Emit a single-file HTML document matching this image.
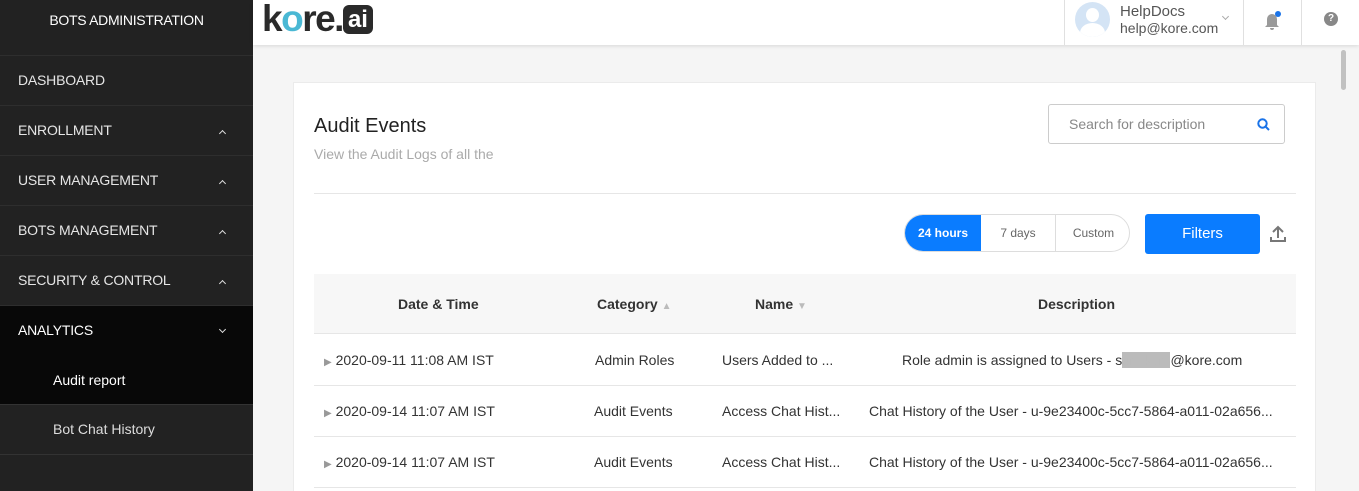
<!DOCTYPE html>
<html><head><style>
*{box-sizing:border-box;margin:0;padding:0}
html{width:1359px;height:491px;overflow:hidden}
body{width:1359px;height:491px;overflow:hidden;font-family:"Liberation Sans",sans-serif;background:#f5f5f5;position:relative}
.sb{position:absolute;left:0;top:0;width:253px;height:491px;background:#222}
.sb .t{height:56px;color:#fff;font-size:14px;text-align:center;padding-top:12px;letter-spacing:-0.3px;border-bottom:1px solid #2e2e2e}
.it{height:50px;border-bottom:1px solid #2e2e2e;color:#e6e6e6;font-size:14px;padding:16px 0 0 18px;position:relative;letter-spacing:-0.2px}
.it .c{position:absolute;left:220px;top:25px;width:5px;height:5px;border-left:1.5px solid #ddd;border-top:1.5px solid #ddd;transform:rotate(45deg)}
.it .d{transform:rotate(225deg);top:21px}
.an{background:#080808;border-bottom:none}
.sub{height:50px;color:#fff;font-size:14px;padding:16px 0 0 53px;border-bottom:1px solid #333}
.hd{position:absolute;left:253px;top:0;right:0;height:45px;background:#fff;box-shadow:0 1px 4px rgba(0,0,0,.12)}
.card{position:absolute;left:293px;top:82px;width:1023px;height:409px;background:#fff;border:1px solid #ebebeb;border-bottom:none;overflow:hidden}
.cell{position:absolute;font-size:14px;color:#333}
</style></head><body>
<div class="sb">
<div class="t">BOTS ADMINISTRATION</div>
<div class="it">DASHBOARD</div>
<div class="it">ENROLLMENT<span class="c"></span></div>
<div class="it">USER MANAGEMENT<span class="c"></span></div>
<div class="it">BOTS MANAGEMENT<span class="c"></span></div>
<div class="it">SECURITY &amp; CONTROL<span class="c"></span></div>
<div class="it an" style="color:#fff">ANALYTICS<span class="c d"></span></div>
<div class="sub" style="background:#080808;padding-top:0;height:49px;line-height:48px">Audit report</div>
<div class="sub" style="color:#ddd">Bot Chat History</div>
</div>
<div class="hd">
<div style="position:absolute;left:9px;top:-2px;font-size:37px;font-weight:bold;color:#2a2a2a;letter-spacing:-1.5px">k<span style="color:#4ab8d4">o</span>re.<span style="display:inline-block;background:#2a2a2a;color:#fff;border-radius:6px;font-size:24px;padding:0 5px;line-height:29px;vertical-align:4px;letter-spacing:0">ai</span></div>
<div style="position:absolute;left:811px;top:0;width:1px;height:45px;background:#e0e0e0"></div>
<div style="position:absolute;left:822px;top:2px;width:35px;height:35px;border-radius:50%;background:#d4e4f5;overflow:hidden"><div style="position:absolute;left:11px;top:6px;width:13px;height:14px;border-radius:50%;background:#fff"></div><div style="position:absolute;left:5px;top:21px;width:25px;height:20px;border-radius:50%;background:#fff"></div></div>
<div style="position:absolute;left:867px;top:3px;font-size:15px;color:#555">HelpDocs</div>
<div style="position:absolute;left:867px;top:20px;font-size:14px;color:#555">help@kore.com</div>
<div style="position:absolute;left:970px;top:14px;width:5px;height:5px;border-right:1px solid #aaa;border-bottom:1px solid #aaa;transform:rotate(45deg)"></div>
<div style="position:absolute;left:990px;top:0;width:1px;height:45px;background:#e0e0e0"></div>
<svg style="position:absolute;left:1010px;top:10px" width="20" height="22" viewBox="0 0 20 22"><path d="M4 15V9a5 5 0 0 1 10 0v6l2 2H2z M7 18a2 2 0 0 0 4 0z" fill="#9a9a9a"/><circle cx="15" cy="4" r="3" fill="#1a73e8"/></svg>
<div style="position:absolute;left:1048px;top:0;width:1px;height:45px;background:#e0e0e0"></div>
<div style="position:absolute;left:1071px;top:12px;width:14px;height:14px;border-radius:50%;background:#888;color:#fff;font-size:10px;font-weight:bold;text-align:center;line-height:14px">?</div>
</div>
<div style="position:absolute;left:1341px;top:50px;width:5px;height:40px;border-radius:3px;background:#c1c1c1"></div>
<div class="card">
<div style="position:absolute;left:20px;top:32px;font-size:20px;color:#222">Audit Events</div>
<div style="position:absolute;left:20px;top:63px;font-size:14px;color:#aaa">View the Audit Logs of all the</div>
<div style="position:absolute;left:754px;top:21px;width:237px;height:40px;border:1px solid #ccc;border-radius:3px;font-size:14px;color:#888;padding:11px 0 0 20px">Search for description
<svg style="position:absolute;right:14px;top:13px" width="13" height="13" viewBox="0 0 13 13"><circle cx="5.5" cy="5.5" r="4.2" stroke="#1a73e8" stroke-width="2" fill="none"/><path d="M8.5 8.5l3.5 3.5" stroke="#1a73e8" stroke-width="2"/></svg></div>
<div style="position:absolute;left:20px;top:110px;width:982px;height:1px;background:#e6e6e6"></div>
<div style="position:absolute;left:610px;top:131px;width:226px;height:38px;border:1px solid #ddd;border-radius:19px;overflow:hidden;font-size:12px;color:#666">
<div style="position:absolute;left:0;top:0;width:76px;height:38px;background:#0a7cff;color:#fff;font-weight:bold;text-align:center;line-height:37px">24 hours</div>
<div style="position:absolute;left:76px;top:0;width:75px;height:38px;border-right:1px solid #ddd;text-align:center;line-height:37px">7 days</div>
<div style="position:absolute;left:151px;top:0;width:75px;text-align:center;line-height:37px">Custom</div></div>
<div style="position:absolute;left:851px;top:131px;width:115px;height:40px;background:#0a7cff;border-radius:3px;color:#fff;font-size:15px;text-align:center;line-height:40px">Filters</div>
<svg style="position:absolute;left:975px;top:142px" width="18" height="18" viewBox="0 0 18 18"><path d="M9 13V2M4 7l5-5 5 5M2 12v4h14v-4" stroke="#777" stroke-width="2" fill="none"/></svg>
<div style="position:absolute;left:20px;top:191px;width:982px;height:60px;background:#f7f7f7;border-bottom:1px solid #e6e6e6"></div>
<div class="cell" style="left:104px;top:213px;font-weight:bold">Date &amp; Time</div>
<div class="cell" style="left:303px;top:213px;font-weight:bold">Category <span style="color:#bbb;font-size:10px">▲</span></div>
<div class="cell" style="left:461px;top:213px;font-weight:bold">Name <span style="color:#bbb;font-size:10px">▼</span></div>
<div class="cell" style="left:744px;top:213px;font-weight:bold">Description</div>
<div style="position:absolute;left:20px;top:302px;width:982px;height:1px;background:#e6e6e6"></div>
<div style="position:absolute;left:20px;top:353px;width:982px;height:1px;background:#e6e6e6"></div>
<div style="position:absolute;left:20px;top:404px;width:982px;height:1px;background:#e6e6e6"></div>
<div class="cell" style="left:30px;top:269px"><span style="color:#999;font-size:10px">▶</span>&nbsp;2020-09-11 11:08 AM IST</div>
<div class="cell" style="left:301px;top:269px">Admin Roles</div>
<div class="cell" style="left:428px;top:269px">Users Added to ...</div>
<div class="cell" style="left:608px;top:269px">Role admin is assigned to Users - s<span style="background:#bbb;color:#bbb">unilkum</span>@kore.com</div>
<div class="cell" style="left:30px;top:320px"><span style="color:#999;font-size:10px">▶</span>&nbsp;2020-09-14 11:07 AM IST</div>
<div class="cell" style="left:300px;top:320px">Audit Events</div>
<div class="cell" style="left:428px;top:320px">Access Chat Hist...</div>
<div class="cell" style="left:575px;top:320px">Chat History of the User - u-9e23400c-5cc7-5864-a011-02a656...</div>
<div class="cell" style="left:30px;top:371px"><span style="color:#999;font-size:10px">▶</span>&nbsp;2020-09-14 11:07 AM IST</div>
<div class="cell" style="left:300px;top:371px">Audit Events</div>
<div class="cell" style="left:428px;top:371px">Access Chat Hist...</div>
<div class="cell" style="left:575px;top:371px">Chat History of the User - u-9e23400c-5cc7-5864-a011-02a656...</div>
</div>
</body></html>
